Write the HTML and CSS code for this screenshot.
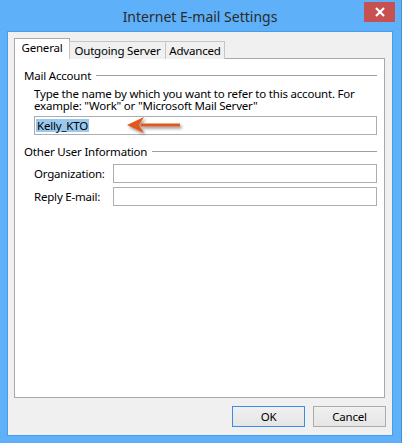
FILE: index.html
```html
<!DOCTYPE html>
<html>
<head>
<meta charset="utf-8">
<link rel="stylesheet" href="styles.css">
</head>
<body>
<div class="window">
  <div class="titlebar"><span class="title">Internet E-mail Settings</span></div>
  <div class="close">
    <svg width="12" height="12" viewBox="0 0 12 12"><path d="M2 2 L10 10 M10 2 L2 10" stroke="#fff" stroke-width="2.2"/></svg>
  </div>
  <div class="dialog">
    <div class="tabs">
      <div class="tab active">General</div>
      <div class="tab t2">Outgoing Server</div>
      <div class="tab t3">Advanced</div>
    </div>
    <div class="panel">
      <div class="group-head"><span>Mail Account</span><div class="rule"></div></div>
      <div class="desc">Type the name by which you want to refer to this account. For example: "Work" or "Microsoft Mail Server"</div>
      <div class="input wide"><span class="sel">Kelly_KTO</span></div>
      <div class="group-head second"><span>Other User Information</span><div class="rule"></div></div>
      <div class="field-row"><span class="label">Organization:</span><div class="input grow"></div></div>
      <div class="field-row"><span class="label">Reply E-mail:</span><div class="input grow"></div></div>
      <svg class="arrow" width="64" height="24" viewBox="0 0 64 24">
        <defs>
          <filter id="sh" x="-20%" y="-50%" width="140%" height="200%">
            <feDropShadow dx="1.5" dy="2" stdDeviation="1.5" flood-color="#000" flood-opacity="0.45"/>
          </filter>
        </defs>
        <g filter="url(#sh)">
          <path d="M17 10.5 L56 10.5 L56 13.5 L17 13.5 Z" fill="#e0581f"/>
          <path d="M3 12 L20 4 L15 12 L20 20 Z" fill="#e0581f"/>
        </g>
      </svg>
    </div>
    <div class="buttons">
      <div class="btn default">OK</div>
      <div class="btn">Cancel</div>
    </div>
  </div>
</div>
</body>
</html>
```
FILE: styles.css
```css
html, body {
  margin: 0;
  padding: 0;
  background: #fff;
}
body {
  font-family: "Noto Sans", "DejaVu Sans", sans-serif;
  font-size: 11.5px;
  letter-spacing: -0.2px;
  color: #000;
}
.window {
  position: relative;
  width: 402px;
  height: 443px;
  box-sizing: border-box;
  background: #5eb0f9;
  padding: 0 8px 7px 7px;
  display: flex;
  flex-direction: column;
  border-right: 1px solid #4a90d0;
}
.titlebar {
  height: 31px;
  display: flex;
  align-items: center;
  justify-content: center;
  flex: none;
}
.title {
  font-size: 14px;
  letter-spacing: 0;
  color: #2b2b2b;
  margin-top: 1px;
}
.close {
  position: absolute;
  left: 364px;
  top: 2px;
  width: 31px;
  height: 20px;
  background: #c75050;
  display: flex;
  align-items: center;
  justify-content: center;
}
.dialog {
  flex: 1;
  background: #f0f0f0;
  border: 1px solid #4c9be6;
  display: flex;
  flex-direction: column;
  padding: 7px 7px 0 6px;
}
.tabs {
  display: flex;
  align-items: flex-end;
  height: 20px;
  position: relative;
  z-index: 1;
  margin-bottom: -1px;
}
.tab {
  height: 18px;
  box-sizing: border-box;
  border: 1px solid #c6c6c6;
  border-bottom: none;
  background: #f0f0f0;
  line-height: 17px;
  text-align: center;
  margin-left: -1px;
}
.tab.t2 {
  width: 97px;
}
.tab.t3 {
  width: 60px;
}
.tab.active {
  height: 21px;
  background: #fff;
  border-color: #a9a9a9;
  margin-left: 0;
  line-height: 18px;
  width: 56px;
}
.panel {
  position: relative;
  height: 340px;
  box-sizing: border-box;
  background: #fff;
  border: 1px solid #a9a9a9;
  padding: 8px 7px 0 9px;
  display: flex;
  flex-direction: column;
}
.group-head {
  display: flex;
  align-items: center;
  gap: 5px;
  height: 16px;
}
.group-head.second {
  margin-top: 8px;
}
.rule {
  flex: 1;
  height: 1px;
  background: #a0a0a0;
}
.desc {
  margin: 5px 0 0 10px;
  line-height: 12px;
  width: 325px;
}
.input {
  height: 19px;
  box-sizing: border-box;
  border: 1px solid #abadb3;
  background: #fff;
}
.input.wide {
  margin: 4px 0 0 10px;
  display: flex;
  align-items: center;
  padding-left: 1px;
}
.sel {
  background: #99c9ef;
  line-height: 13px;
  padding: 0 1px;
}
.field-row {
  display: flex;
  align-items: center;
  margin: 4px 0 0 10px;
}
.group-head.second + .field-row {
  margin-top: 5px;
}
.label {
  width: 79px;
}
.grow {
  flex: 1;
}
.arrow {
  position: absolute;
  left: 109px;
  top: 54px;
}
.buttons {
  display: flex;
  justify-content: flex-end;
  gap: 8px;
  margin-top: 8px;
  margin-right: -1px;
}
.btn {
  width: 73px;
  height: 21px;
  box-sizing: border-box;
  border: 1px solid #acacac;
  background: linear-gradient(#f0f0f0, #e5e5e5);
  display: flex;
  align-items: center;
  justify-content: center;
}
.btn.default {
  border-color: #3c8ce6;
}
```
